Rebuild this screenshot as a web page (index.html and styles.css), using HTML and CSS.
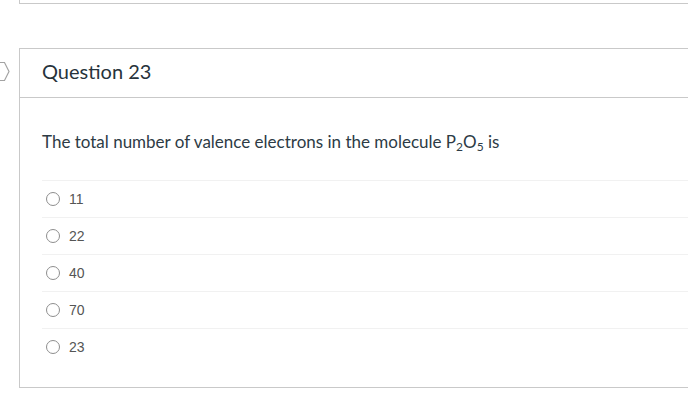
FILE: index.html
```html
<!DOCTYPE html>
<html>
<head>
<meta charset="utf-8">
<link rel="stylesheet" href="styles.css">
</head>
<body>
<div class="prev-card"></div>
<div class="row">
  <div class="gutter">
    <svg class="flag" width="19" height="22" viewBox="0 0 19 22">
      <path d="M-4 1.5 L4.5 1.5 L9 10.5 L4.5 19.5 L-4 19.5" fill="none" stroke="#a3a3a3" stroke-width="1.2"/>
    </svg>
  </div>
  <div class="card">
    <div class="card-header">Question 23</div>
    <div class="card-body">
      <p class="question">The total number of valence electrons in the molecule P<sub>2</sub>O<sub>5</sub> is</p>
      <ul class="answers">
        <li class="answer"><span class="radio"></span><span class="label">11</span></li>
        <li class="answer"><span class="radio"></span><span class="label">22</span></li>
        <li class="answer"><span class="radio"></span><span class="label">40</span></li>
        <li class="answer"><span class="radio"></span><span class="label">70</span></li>
        <li class="answer"><span class="radio"></span><span class="label">23</span></li>
      </ul>
    </div>
  </div>
</div>
</body>
</html>
```
FILE: styles.css
```css
html, body {
  margin: 0;
  padding: 0;
  background: #ffffff;
  overflow: hidden;
  width: 688px;
  height: 406px;
}
body {
  font-family: Lato, "Liberation Sans", sans-serif;
  color: #2d3b45;
}
.prev-card {
  margin-left: 19px;
  height: 3px;
  border-left: 1px solid #c9c9c9;
  border-bottom: 1px solid #c9c9c9;
}
.row {
  display: flex;
  margin-top: 44px;
}
.gutter {
  width: 19px;
  flex: none;
  padding-top: 13px;
}
.flag {
  display: block;
}
.card {
  flex: 1;
  border: 1px solid #c9c9c9;
  border-right: none;
}
.card-header {
  height: 49px;
  box-sizing: border-box;
  padding-bottom: 5px;
  display: flex;
  align-items: center;
  padding-left: 22px;
  font-size: 20px;
  color: #27333b;
  border-bottom: 1px solid #c9c9c9;
}
.card-body {
  padding: 32px 0 22px 22px;
}
.question {
  margin: 0 0 26px 0;
  font-size: 17px;
  line-height: 24px;
}
.question sub {
  font-size: 12px;
  vertical-align: -3px;
  line-height: 0;
}
.answers {
  list-style: none;
  margin: 0;
  padding: 0;
}
.answer {
  height: 36px;
  border-top: 1px solid #f1f1f1;
  display: flex;
  align-items: center;
  padding-left: 4px;
}
.radio {
  width: 12px;
  height: 12px;
  border: 1px solid #8e8e8e;
  border-radius: 50%;
  margin-right: 9px;
  flex: none;
}
.label {
  font-family: "Liberation Sans", Arial, sans-serif;
  font-size: 14px;
  color: #555555;
}
```
